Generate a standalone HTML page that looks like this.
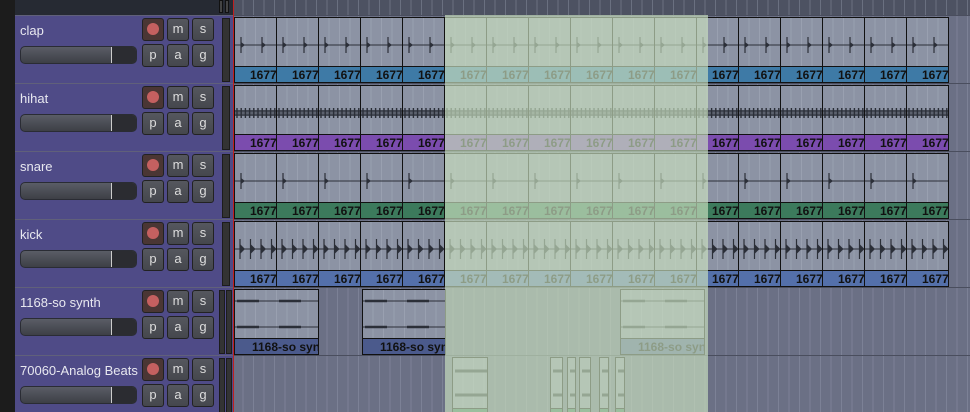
<!DOCTYPE html>
<html><head><meta charset="utf-8"><style>
*{margin:0;padding:0;box-sizing:border-box}
html{width:970px;height:412px;overflow:hidden}
body{width:970px;height:412px;overflow:hidden;background:#6b7085;font-family:"Liberation Sans","DejaVu Sans",sans-serif;position:relative}
.abs{position:absolute}
#left{left:0;top:0;width:15px;height:412px;background:#1c1c1c}
#hdrtop{left:15px;top:0;width:218px;height:15px;background:#262a33}
#ruler{left:233px;top:0;width:737px;height:15px;background:#4d5262;
background-image:repeating-linear-gradient(90deg,transparent 0 9.5px,#6a7080 9.5px 10.5px)}
.th{position:absolute;left:15px;width:218px;height:68px;background:#4f4b87;border-top:1px solid #60607a;overflow:hidden}
.name{position:absolute;left:5px;top:7px;color:#e8e8f0;font-size:13px;white-space:nowrap;width:118px;overflow:hidden}
.fader{position:absolute;left:5px;top:30px;width:117px;height:18px;border-radius:5px;background:linear-gradient(#5a5d66,#3d3f46);border:1px solid #2a2c34;overflow:hidden}
.fader i{position:absolute;left:90px;top:0;width:26px;height:18px;background:#2b2c31;border-left:1px solid #ccc}
.btn{position:absolute;width:22px;height:23px;border-radius:3px;background:linear-gradient(#55575e,#45474d);border:1px solid #222;color:#ddd;font-size:13px;text-align:center;line-height:20px}
.rec{background:#4a3634}
.rec b{display:block;width:12px;height:12px;border-radius:50%;background:#c46060;margin:4px auto}
.meter{position:absolute;top:2px;height:64px;background:#333;border:1px solid #1c1c1c}
.tl{position:absolute;left:233px;width:737px;height:68px;border-top:1px solid #4a4e5e;overflow:hidden;
background-image:repeating-linear-gradient(90deg,transparent 0 9.5px,#7c8196 9.5px 10.5px)}
.reg{position:absolute;border:1px solid #111;background:#8c93a4;overflow:hidden;
background-image:repeating-linear-gradient(90deg,transparent 0 9.5px,#99a0b0 9.5px 10.5px)}
.lab{position:absolute;left:0;right:0;bottom:0;height:16px;font-weight:bold;font-size:12px;color:#111;padding-left:15px;line-height:16px;white-space:nowrap;overflow:hidden}
#sel{left:445px;top:15px;width:263px;height:397px;background:rgba(200,222,190,.68)}
#red{left:233px;top:0;width:1px;height:412px;background:#c02020}
</style></head><body>
<div id="left" class="abs"></div>
<div id="hdrtop" class="abs"><div class="abs" style="left:204px;top:0;width:4px;height:13px;border:1px solid #111;background:#444"></div><div class="abs" style="left:210px;top:0;width:4px;height:13px;border:1px solid #111;background:#444"></div></div>
<div id="ruler" class="abs"></div>
<div id="root"></div>
<div id="sel" class="abs"></div>
<div id="red" class="abs"></div>
<script>
const root=document.getElementById('root');
const tracks=[
 {n:'clap',c:'#3e7aa6',t:'16779',w:'clap'},
 {n:'hihat',c:'#7b4cae',t:'16779',w:'hh'},
 {n:'snare',c:'#3c7a5c',t:'16776',w:'sn'},
 {n:'kick',c:'#5470aa',t:'16776',w:'kk'},
 {n:'1168-so synth',st:1},
 {n:'70060-Analog Beats',st:1}];
let h='';
tracks.forEach((tr,i)=>{
 const y=15+i*68; const th=i==5?57:68;
 h+=`<div class="th" style="top:${y}px;height:${th}px"><div class="name">${tr.n}</div><div class="fader"><i></i></div>
 <div class="btn rec" style="left:127px;top:2px"><b></b></div><div class="btn" style="left:152px;top:2px">m</div><div class="btn" style="left:177px;top:2px">s</div>
 <div class="btn" style="left:127px;top:28px">p</div><div class="btn" style="left:152px;top:28px">a</div><div class="btn" style="left:177px;top:28px">g</div>
 ${tr.st?'<div class="meter" style="left:204px;width:6px"></div><div class="meter" style="left:211px;width:6px"></div>':'<div class="meter" style="left:207px;width:8px"></div>'}</div>`;
 h+=`<div class="tl" style="top:${y}px;height:${th}px">`;
 if(!tr.st){
  for(let k=0;k<17;k++){
   const x=1+42*k;
   let sp='';
   const spike=(o)=>`<path d="M${o} 10V26" stroke="#2b2f38" stroke-width="1.2"/><path d="M${o} 15L${o+4} 18L${o} 21Z" fill="#2b2f38"/>`;
   if(tr.w=='clap'){sp=spike(6)+spike(27);}
   if(tr.w=='sn'){sp=spike(6);}
   if(tr.w=='kk'){for(let j=0;j<4;j++){const o=5+j*10.5;sp+=`<path d="M${o} 8V28" stroke="#2b2f38" stroke-width="1.2"/><path d="M${o} 13L${o+5} 18L${o} 23Z" fill="#2b2f38"/>`;}}
   if(tr.w=='hh'){for(let j=0;j<10;j++)sp+=`<path d="M${2+j*4.2} 13V23" stroke="#2b2f38" stroke-width="1.4"/>`;sp+=`<path d="M0 16h43M0 20h43" stroke="#2b2f38" stroke-width="1.5"/>`;}
   h+=`<div class="reg" style="left:${x}px;top:1px;width:43px;height:66px"><svg class="abs" style="left:0;top:9px" width="43" height="36"><path d="M0 18H43" stroke="#2b2f38" stroke-width="1"/>${sp}</svg><div class="lab" style="background:${tr.c};border-top:1px solid #111">${tr.t}</div></div>`;
  }
 } else if(i==4){
  [[1,85],[129,84],[387,85]].forEach(([x,w])=>{
   let wv='';for(let j=0;j<w;j+=42)wv+=`<path d="M${j+2} 11h22M${j+2} 37h22" stroke="#2b2f38" stroke-width="2.5"/>`;
   h+=`<div class="reg" style="left:${x}px;top:1px;width:${w}px;height:66px"><svg class="abs" style="left:0;top:0" width="${w}" height="50"><path d="M0 11H${w}M0 37H${w}" stroke="#2b2f38"/>${wv}</svg><div class="lab" style="background:#4b5a8c;border-top:1px solid #111;padding-left:17px">1168-so synth</div></div>`;
  });
 } else {
  [[219,36],[317,13],[334,9],[346,12],[366,10],[382,10]].forEach(([x,w])=>{
   h+=`<div class="reg" style="left:${x}px;top:1px;width:${w}px;height:60px"><svg class="abs" style="left:0;top:0" width="${w}" height="50"><path d="M2 13H${w-2}M2 37H${w-2}" stroke="#2b2f38" stroke-width="3"/></svg><div class="abs" style="left:0;right:0;top:50px;height:12px;background:#3c7a5c;border-top:1px solid #111"></div></div>`;
  });
 }
 h+='</div>';
});
root.innerHTML=h;
</script>
</body></html>
